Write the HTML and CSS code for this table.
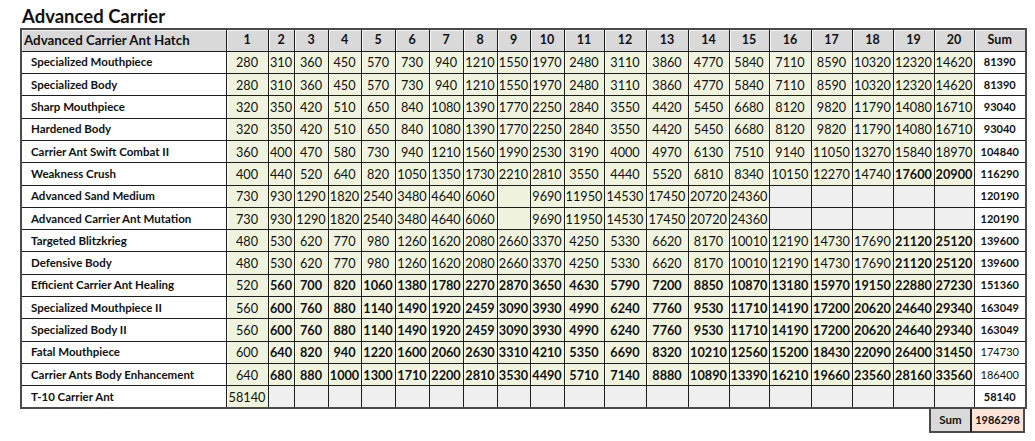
FILE: index.html
```html
<!DOCTYPE html>
<html>
<head>
<meta charset="utf-8">
<link rel="stylesheet" href="styles.css">
</head>
<body>
<div class="sheet">
<h1 class="title">Advanced Carrier</h1>
<table class="grid">
<colgroup>
<col class="c-label"><col class="w42"><col class="w26"><col class="w34"><col class="w33"><col class="w34"><col class="w34"><col class="w34"><col class="w34"><col class="w33"><col class="w34"><col class="w40"><col class="w42"><col class="w42"><col class="w41"><col class="w40"><col class="w42"><col class="w41"><col class="w41"><col class="w41"><col class="w40"><col class="w52">
</colgroup>
<thead>
<tr><th class="hl">Advanced Carrier Ant Hatch</th><th>1</th><th>2</th><th>3</th><th>4</th><th>5</th><th>6</th><th>7</th><th>8</th><th>9</th><th>10</th><th>11</th><th>12</th><th>13</th><th>14</th><th>15</th><th>16</th><th>17</th><th>18</th><th>19</th><th>20</th><th>Sum</th></tr>
</thead>
<tbody>
<tr><td class="lb">Specialized Mouthpiece</td><td class="g">280</td><td class="g">310</td><td class="g">360</td><td class="g">450</td><td class="g">570</td><td class="g">730</td><td class="g">940</td><td class="g">1210</td><td class="g">1550</td><td class="g">1970</td><td class="g">2480</td><td class="g">3110</td><td class="g">3860</td><td class="g">4770</td><td class="g">5840</td><td class="g">7110</td><td class="g">8590</td><td class="g">10320</td><td class="g">12320</td><td class="g">14620</td><td class="s b">81390</td></tr>
<tr><td class="lb">Specialized Body</td><td class="g">280</td><td class="g">310</td><td class="g">360</td><td class="g">450</td><td class="g">570</td><td class="g">730</td><td class="g">940</td><td class="g">1210</td><td class="g">1550</td><td class="g">1970</td><td class="g">2480</td><td class="g">3110</td><td class="g">3860</td><td class="g">4770</td><td class="g">5840</td><td class="g">7110</td><td class="g">8590</td><td class="g">10320</td><td class="g">12320</td><td class="g">14620</td><td class="s b">81390</td></tr>
<tr><td class="lb">Sharp Mouthpiece</td><td class="g">320</td><td class="g">350</td><td class="g">420</td><td class="g">510</td><td class="g">650</td><td class="g">840</td><td class="g">1080</td><td class="g">1390</td><td class="g">1770</td><td class="g">2250</td><td class="g">2840</td><td class="g">3550</td><td class="g">4420</td><td class="g">5450</td><td class="g">6680</td><td class="g">8120</td><td class="g">9820</td><td class="g">11790</td><td class="g">14080</td><td class="g">16710</td><td class="s b">93040</td></tr>
<tr><td class="lb">Hardened Body</td><td class="g">320</td><td class="g">350</td><td class="g">420</td><td class="g">510</td><td class="g">650</td><td class="g">840</td><td class="g">1080</td><td class="g">1390</td><td class="g">1770</td><td class="g">2250</td><td class="g">2840</td><td class="g">3550</td><td class="g">4420</td><td class="g">5450</td><td class="g">6680</td><td class="g">8120</td><td class="g">9820</td><td class="g">11790</td><td class="g">14080</td><td class="g">16710</td><td class="s b">93040</td></tr>
<tr><td class="lb">Carrier Ant Swift Combat II</td><td class="g">360</td><td class="g">400</td><td class="g">470</td><td class="g">580</td><td class="g">730</td><td class="g">940</td><td class="g">1210</td><td class="g">1560</td><td class="g">1990</td><td class="g">2530</td><td class="g">3190</td><td class="g">4000</td><td class="g">4970</td><td class="g">6130</td><td class="g">7510</td><td class="g">9140</td><td class="g">11050</td><td class="g">13270</td><td class="g">15840</td><td class="g">18970</td><td class="s b">104840</td></tr>
<tr><td class="lb">Weakness Crush</td><td class="g">400</td><td class="g">440</td><td class="g">520</td><td class="g">640</td><td class="g">820</td><td class="g">1050</td><td class="g">1350</td><td class="g">1730</td><td class="g">2210</td><td class="g">2810</td><td class="g">3550</td><td class="g">4440</td><td class="g">5520</td><td class="g">6810</td><td class="g">8340</td><td class="g">10150</td><td class="g">12270</td><td class="g">14740</td><td class="g b">17600</td><td class="g b">20900</td><td class="s b">116290</td></tr>
<tr><td class="lb">Advanced Sand Medium</td><td class="g">730</td><td class="g">930</td><td class="g">1290</td><td class="g">1820</td><td class="g">2540</td><td class="g">3480</td><td class="g">4640</td><td class="g">6060</td><td class="g"></td><td class="g">9690</td><td class="g">11950</td><td class="g">14530</td><td class="g">17450</td><td class="g">20720</td><td class="g">24360</td><td class="e"></td><td class="e"></td><td class="e"></td><td class="e"></td><td class="e"></td><td class="s b">120190</td></tr>
<tr><td class="lb">Advanced Carrier Ant Mutation</td><td class="g">730</td><td class="g">930</td><td class="g">1290</td><td class="g">1820</td><td class="g">2540</td><td class="g">3480</td><td class="g">4640</td><td class="g">6060</td><td class="g"></td><td class="g">9690</td><td class="g">11950</td><td class="g">14530</td><td class="g">17450</td><td class="g">20720</td><td class="g">24360</td><td class="e"></td><td class="e"></td><td class="e"></td><td class="e"></td><td class="e"></td><td class="s b">120190</td></tr>
<tr><td class="lb">Targeted Blitzkrieg</td><td class="g">480</td><td class="g">530</td><td class="g">620</td><td class="g">770</td><td class="g">980</td><td class="g">1260</td><td class="g">1620</td><td class="g">2080</td><td class="g">2660</td><td class="g">3370</td><td class="g">4250</td><td class="g">5330</td><td class="g">6620</td><td class="g">8170</td><td class="g">10010</td><td class="g">12190</td><td class="g">14730</td><td class="g">17690</td><td class="g b">21120</td><td class="g b">25120</td><td class="s b">139600</td></tr>
<tr><td class="lb">Defensive Body</td><td class="g">480</td><td class="g">530</td><td class="g">620</td><td class="g">770</td><td class="g">980</td><td class="g">1260</td><td class="g">1620</td><td class="g">2080</td><td class="g">2660</td><td class="g">3370</td><td class="g">4250</td><td class="g">5330</td><td class="g">6620</td><td class="g">8170</td><td class="g">10010</td><td class="g">12190</td><td class="g">14730</td><td class="g">17690</td><td class="g b">21120</td><td class="g b">25120</td><td class="s b">139600</td></tr>
<tr><td class="lb">Efficient Carrier Ant Healing</td><td class="g">520</td><td class="g b">560</td><td class="g b">700</td><td class="g b">820</td><td class="g b">1060</td><td class="g b">1380</td><td class="g b">1780</td><td class="g b">2270</td><td class="g b">2870</td><td class="g b">3650</td><td class="g b">4630</td><td class="g b">5790</td><td class="g b">7200</td><td class="g b">8850</td><td class="g b">10870</td><td class="g b">13180</td><td class="g b">15970</td><td class="g b">19150</td><td class="g b">22880</td><td class="g b">27230</td><td class="s b">151360</td></tr>
<tr><td class="lb">Specialized Mouthpiece II</td><td class="g">560</td><td class="g b">600</td><td class="g b">760</td><td class="g b">880</td><td class="g b">1140</td><td class="g b">1490</td><td class="g b">1920</td><td class="g b">2459</td><td class="g b">3090</td><td class="g b">3930</td><td class="g b">4990</td><td class="g b">6240</td><td class="g b">7760</td><td class="g b">9530</td><td class="g b">11710</td><td class="g b">14190</td><td class="g b">17200</td><td class="g b">20620</td><td class="g b">24640</td><td class="g b">29340</td><td class="s b">163049</td></tr>
<tr><td class="lb">Specialized Body II</td><td class="g">560</td><td class="g b">600</td><td class="g b">760</td><td class="g b">880</td><td class="g b">1140</td><td class="g b">1490</td><td class="g b">1920</td><td class="g b">2459</td><td class="g b">3090</td><td class="g b">3930</td><td class="g b">4990</td><td class="g b">6240</td><td class="g b">7760</td><td class="g b">9530</td><td class="g b">11710</td><td class="g b">14190</td><td class="g b">17200</td><td class="g b">20620</td><td class="g b">24640</td><td class="g b">29340</td><td class="s b">163049</td></tr>
<tr><td class="lb">Fatal Mouthpiece</td><td class="g">600</td><td class="g b">640</td><td class="g b">820</td><td class="g b">940</td><td class="g b">1220</td><td class="g b">1600</td><td class="g b">2060</td><td class="g b">2630</td><td class="g b">3310</td><td class="g b">4210</td><td class="g b">5350</td><td class="g b">6690</td><td class="g b">8320</td><td class="g b">10210</td><td class="g b">12560</td><td class="g b">15200</td><td class="g b">18430</td><td class="g b">22090</td><td class="g b">26400</td><td class="g b">31450</td><td class="s">174730</td></tr>
<tr><td class="lb">Carrier Ants Body Enhancement</td><td class="g">640</td><td class="g b">680</td><td class="g b">880</td><td class="g b">1000</td><td class="g b">1300</td><td class="g b">1710</td><td class="g b">2200</td><td class="g b">2810</td><td class="g b">3530</td><td class="g b">4490</td><td class="g b">5710</td><td class="g b">7140</td><td class="g b">8880</td><td class="g b">10890</td><td class="g b">13390</td><td class="g b">16210</td><td class="g b">19660</td><td class="g b">23560</td><td class="g b">28160</td><td class="g b">33560</td><td class="s">186400</td></tr>
<tr><td class="lb">T-10 Carrier Ant</td><td class="g">58140</td><td class="e"></td><td class="e"></td><td class="e"></td><td class="e"></td><td class="e"></td><td class="e"></td><td class="e"></td><td class="e"></td><td class="e"></td><td class="e"></td><td class="e"></td><td class="e"></td><td class="e"></td><td class="e"></td><td class="e"></td><td class="e"></td><td class="e"></td><td class="e"></td><td class="e"></td><td class="s b">58140</td></tr>
</tbody>
</table>
<div class="total">
<div class="total-label">Sum</div>
<div class="total-value">1986298</div>
</div>
</div>
</body>
</html>
```

FILE: styles.css
```css
html, body {
  margin: 0;
  padding: 0;
  background: #ffffff;
}
body {
  font-family: "Lato", "Open Sans", "Liberation Sans", sans-serif;
  color: #111;
}
.sheet {
  width: 1005px;
  padding: 6px 0 0 20px;
}
.title {
  margin: 0 0 2px 2px;
  font-size: 18.5px;
  font-weight: 700;
  line-height: 20px;
  color: #111;
}
.grid {
  width: 1005px;
  table-layout: fixed;
  border-collapse: collapse;
  border: 2px solid #4a4a4a;
}
.c-label { width: 205px; }
.w26 { width: 26px; }
.w33 { width: 33px; }
.w34 { width: 34px; }
.w40 { width: 40px; }
.w41 { width: 41px; }
.w42 { width: 42px; }
.w52 { width: 52px; }
.grid tr {
  height: 22.3px;
}
.grid th,
.grid td {
  border: 1px solid #1e1e1e;
  padding: 0;
  text-align: center;
  white-space: nowrap;
  overflow: hidden;
  line-height: 20px;
}
.grid th {
  background: #d9d9d9;
  font-size: 12.5px;
  font-weight: 700;
  box-shadow: inset 1px 1px 0 #f4f4f4;
}
.grid th.hl {
  text-align: left;
  padding-left: 2px;
  font-size: 13.3px;
}
.grid td {
  font-size: 12.7px;
}
.grid td.lb {
  text-align: left;
  padding-left: 9px;
  font-size: 11.5px;
  font-weight: 700;
  background: #ffffff;
}
.grid td.g {
  background: #f0f4de;
  box-shadow: inset 1px 0 0 #fbfcf4;
}
.grid td.e {
  background: #f0f0f0;
}
.grid td.s {
  background: #ffffff;
  font-size: 11px;
}
.grid td.b {
  font-weight: 700;
}
.total {
  display: flex;
  justify-content: flex-end;
}
.total-label,
.total-value {
  height: 22px;
  line-height: 22px;
  text-align: center;
  font-weight: 700;
  border: 1px solid #1e1e1e;
  border-top: none;
  border-bottom: 2px solid #4a4a4a;
}
.total-label {
  width: 39px;
  background: #d9d9d9;
  font-size: 11.5px;
  border-left: 2px solid #4a4a4a;
}
.total-value {
  width: 51px;
  background: #fbe3d6;
  font-size: 11px;
  border-right: 2px solid #4a4a4a;
  border-left: 1px solid #1e1e1e;
}
```
